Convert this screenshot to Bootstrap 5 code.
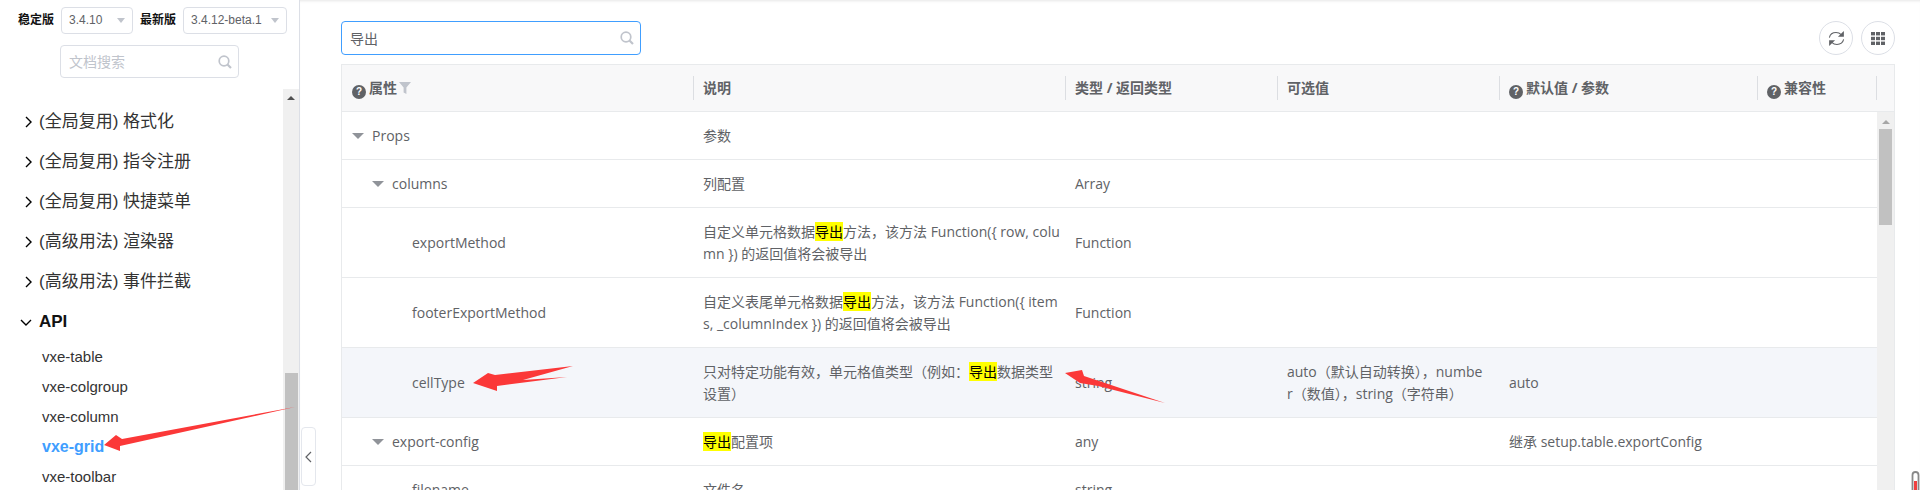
<!DOCTYPE html>
<html lang="zh-CN">
<head>
<meta charset="utf-8">
<title>API</title>
<link href="https://cdn.jsdelivr.net/npm/bootstrap@5.3.0/dist/css/bootstrap.min.css" rel="stylesheet">
<style>
html,body{height:490px;overflow:hidden;background:#fff}
body{font-family:"Open Sans","Noto Sans CJK SC",sans-serif;font-size:14px;color:#606266}
.shell{position:relative;height:490px;width:1920px}
.side{width:300px;height:490px;border-right:1px solid #dcdfe6;font-family:"Liberation Sans","Noto Sans CJK SC",sans-serif;flex:none}
.ver-row{height:41px;padding:7px 0 0 18px;gap:7px}
.ver-lab{font-size:12px;font-weight:700;color:#111;width:36px;white-space:nowrap;line-height:27px}
.sel{height:27px;border:1px solid #dcdfe6;border-radius:4px;font-size:12px;color:#606266;padding:0 7px;line-height:25px}
.sel-a{width:72px}.sel-b{width:104px}
.tri{width:0;height:0;border-left:4px solid transparent;border-right:4px solid transparent;border-top:5px solid #c0c4cc}
.doc-search{width:179px;height:33px;margin:4px 0 11px 60px;position:relative}
.doc-search input,.tool-search input{height:100%;font-size:14px;padding:0 30px 0 8px;border-radius:4px;color:#606266;border:1px solid #dcdfe6;box-shadow:none}
.doc-search input::placeholder{color:#c0c4cc}
.tool-search input,.tool-search input:focus{border-color:#409eff;box-shadow:none;color:#606266}
.mag{position:absolute;top:50%;right:7px;margin-top:-7px}
.side-body{height:401px}
.tree{flex:1;padding-top:13px;color:#303133}
.grp{height:40px;padding-left:25px;font-size:17px;gap:7px;color:#333;white-space:nowrap}
.grp-open{padding-left:20px;font-weight:700;font-size:17px;color:#111;gap:7px;height:40px}
.leaf{height:30px;line-height:30px;padding-left:42px;font-size:15px;color:#333}
.leaf-on{color:#409eff;font-weight:700;font-size:16px}
.sbar{width:16px;background:#f0f0f0;position:relative;flex:none}
.sbar-up{width:0;height:0;border-left:4px solid transparent;border-right:4px solid transparent;border-bottom:4px solid #505050;margin:7px auto 0}
.sbar-thumb{position:absolute;left:2px;width:13px;background:#c1c1c1}
.side-thumb{top:284px;bottom:0}
.toggle{position:absolute;left:301px;top:427px;width:15px;height:59px;background:#fff;border:1px solid #e4e7ed;border-radius:4px}
.main-pane{flex:1;padding:21px 25px 0 41px;box-shadow:inset 0 3px 3px -2px rgba(0,0,0,.1);min-width:0}
.tools{height:34px;margin-bottom:9px}
.tool-search{width:300px;height:34px;position:relative}
.circ{width:34px;height:34px;border-radius:50%;border:1px solid #dcdfe6;background:#fff;padding:0}
.gridbox{border:1px solid #e8eaec;border-bottom:0;height:426px;overflow:hidden}
.gridbox .table{table-layout:fixed;width:1535px;margin:0;border-collapse:separate;border-spacing:0;color:#606266;--bs-table-color:#606266;--bs-table-bg:transparent}
.gridbox td,.gridbox th{padding:0 10px;border-bottom:1px solid #e8eaec;vertical-align:middle;line-height:22px;white-space:nowrap;font-size:14px}
.gridhead{background:#f8f8f9;border-bottom:0}
.gridhead th{height:47px;font-weight:700;position:relative;border-bottom:1px solid #e8eaec}
.gridhead th+th::before,.gridhead th.endcell::after{content:"";position:absolute;top:11px;height:24px;width:1px;background:#dcdee2}
.gridhead th+th::before{left:0}
.gridhead th.endcell::after{right:0}
.hsp{width:18px;border-bottom:1px solid #e8eaec;flex:none}
.help{display:inline-block;width:14px;height:14px;border-radius:50%;background:#606266;color:#fff;font-size:10px;line-height:14px;text-align:center;font-weight:700;margin-right:3px;vertical-align:-2px;font-family:"Liberation Sans",sans-serif}
.funnel{vertical-align:-1px;margin-left:2px}
.gridbody{height:378px;overflow:hidden}
.r48 td{height:48px}.r70 td{height:70px}
.gridbody tr.on td{background:#f4f6fa}
.lv0{padding-left:10px!important}.lv1{padding-left:30px!important}.lv2{padding-left:70px!important}
.twist{display:inline-block;width:0;height:0;border-left:6px solid transparent;border-right:6px solid transparent;border-top:6px solid #909399;margin-right:8px;vertical-align:2px}
.hit{background:#ff0;color:#000}
.tsbar{width:18px;background:#f0f0f0;position:relative;flex:none}
.tsbar .sbar-up{border-bottom-color:#a6a6a6;margin-top:8px;border-left-width:4px;border-right-width:4px}
.body-thumb{left:2px;width:13px;top:17px;height:96px}
.ink{position:absolute;left:0;top:0;width:1920px;height:490px;pointer-events:none}
</style>
</head>
<body>
<div class="shell d-flex">
  <aside class="side d-flex flex-column">
    <div class="ver-row d-flex">
      <span class="ver-lab">稳定版</span>
      <div class="sel sel-a d-flex align-items-center justify-content-between"><span>3.4.10</span><i class="tri"></i></div>
      <span class="ver-lab">最新版</span>
      <div class="sel sel-b d-flex align-items-center justify-content-between"><span>3.4.12-beta.1</span><i class="tri"></i></div>
    </div>
    <div class="doc-search">
      <input class="form-control" placeholder="文档搜索">
      <svg class="mag" width="14" height="14" viewBox="0 0 14 14" fill="none" stroke="#c0c4cc" stroke-width="1.7"><circle cx="6" cy="6" r="4.8"/><path d="M9.5 9.5 13 13" stroke-width="2.2"/></svg>
    </div>
    <div class="side-body d-flex">
      <div class="tree">
        <div class="grp d-flex align-items-center"><svg width="7" height="12" viewBox="0 0 7 12" fill="none" stroke="#000" stroke-width="1.4"><path d="M1 1l5 5-5 5"/></svg><span>(全局复用) 格式化</span></div>
        <div class="grp d-flex align-items-center"><svg width="7" height="12" viewBox="0 0 7 12" fill="none" stroke="#000" stroke-width="1.4"><path d="M1 1l5 5-5 5"/></svg><span>(全局复用) 指令注册</span></div>
        <div class="grp d-flex align-items-center"><svg width="7" height="12" viewBox="0 0 7 12" fill="none" stroke="#000" stroke-width="1.4"><path d="M1 1l5 5-5 5"/></svg><span>(全局复用) 快捷菜单</span></div>
        <div class="grp d-flex align-items-center"><svg width="7" height="12" viewBox="0 0 7 12" fill="none" stroke="#000" stroke-width="1.4"><path d="M1 1l5 5-5 5"/></svg><span>(高级用法) 渲染器</span></div>
        <div class="grp d-flex align-items-center"><svg width="7" height="12" viewBox="0 0 7 12" fill="none" stroke="#000" stroke-width="1.4"><path d="M1 1l5 5-5 5"/></svg><span>(高级用法) 事件拦截</span></div>
        <div class="grp grp-open d-flex align-items-center"><svg width="12" height="7" viewBox="0 0 12 7" fill="none" stroke="#000" stroke-width="1.4"><path d="M1 1l5 5 5-5"/></svg><span>API</span></div>
        <div class="leaf">vxe-table</div>
        <div class="leaf">vxe-colgroup</div>
        <div class="leaf">vxe-column</div>
        <div class="leaf leaf-on">vxe-grid</div>
        <div class="leaf">vxe-toolbar</div>
      </div>
      <div class="sbar"><div class="sbar-up"></div><div class="sbar-thumb side-thumb"></div></div>
    </div>
  </aside>

  <main class="main-pane">
    <div class="tools d-flex justify-content-between">
      <div class="tool-search">
        <input class="form-control" value="导出">
        <svg class="mag" width="14" height="14" viewBox="0 0 14 14" fill="none" stroke="#c0c4cc" stroke-width="1.7"><circle cx="6" cy="6" r="4.8"/><path d="M9.5 9.5 13 13" stroke-width="2.2"/></svg>
      </div>
      <div class="d-flex gap-2">
        <button class="circ btn d-flex align-items-center justify-content-center" type="button" aria-label="refresh">
          <svg width="19" height="19" viewBox="0 0 16 16" fill="none" stroke="#606266" stroke-width=".9"><path d="M2 7.2C2.6 4.6 5 3 7.6 3c1.8 0 3.2.6 4.4 1.8"/><path d="M14.2 1.6v5h-5z" fill="#606266" stroke="none"/><path d="M14 8.8c-.6 2.6-3 4.2-5.6 4.2-1.8 0-3.2-.6-4.4-1.8"/><path d="M1.8 14.4v-5h5z" fill="#606266" stroke="none"/></svg>
        </button>
        <button class="circ btn d-flex align-items-center justify-content-center" type="button" aria-label="columns">
          <svg width="14" height="13" viewBox="0 0 14 13" fill="#606266"><rect x="0" y="0" width="4" height="3.4"/><rect x="5" y="0" width="4" height="3.4"/><rect x="10" y="0" width="4" height="3.4"/><rect x="0" y="4.8" width="4" height="3.4"/><rect x="5" y="4.8" width="4" height="3.4"/><rect x="10" y="4.8" width="4" height="3.4"/><rect x="0" y="9.6" width="4" height="3.4"/><rect x="5" y="9.6" width="4" height="3.4"/><rect x="10" y="9.6" width="4" height="3.4"/></svg>
        </button>
      </div>
    </div>
    <div class="gridbox">
      <div class="gridhead d-flex">
        <table class="table">
          <colgroup><col style="width:351px"><col style="width:372px"><col style="width:212px"><col style="width:222px"><col style="width:258px"><col style="width:120px"></colgroup>
          <thead><tr>
            <th><span class="help">?</span>属性<svg class="funnel" width="12" height="12" viewBox="0 0 12 12" fill="#c0c4cc"><path d="M0 0h12L7.4 5.6V12L4.6 10.4V5.6z"/></svg></th>
            <th>说明</th>
            <th>类型 / 返回类型</th>
            <th>可选值</th>
            <th><span class="help">?</span>默认值 / 参数</th>
            <th class="endcell"><span class="help">?</span>兼容性</th>
          </tr></thead>
        </table>
        <div class="hsp"></div>
      </div>
      <div class="gridbody d-flex">
        <table class="table align-self-start">
          <colgroup><col style="width:351px"><col style="width:372px"><col style="width:212px"><col style="width:222px"><col style="width:258px"><col style="width:120px"></colgroup>
          <tbody>
            <tr class="r48"><td class="lv0"><i class="twist"></i>Props</td><td>参数</td><td></td><td></td><td></td><td></td></tr>
            <tr class="r48"><td class="lv1"><i class="twist"></i>columns</td><td>列配置</td><td>Array</td><td></td><td></td><td></td></tr>
            <tr class="r70"><td class="lv2">exportMethod</td><td>自定义单元格数据<span class="hit">导出</span>方法，该方法 Function({ row, colu<br>mn }) 的返回值将会被导出</td><td>Function</td><td></td><td></td><td></td></tr>
            <tr class="r70"><td class="lv2">footerExportMethod</td><td>自定义表尾单元格数据<span class="hit">导出</span>方法，该方法 Function({ item<br>s, _columnIndex }) 的返回值将会被导出</td><td>Function</td><td></td><td></td><td></td></tr>
            <tr class="r70 on"><td class="lv2">cellType</td><td>只对特定功能有效，单元格值类型（例如：<span class="hit">导出</span>数据类型<br>设置）</td><td>string</td><td>auto（默认自动转换），numbe<br>r（数值），string（字符串）</td><td>auto</td><td></td></tr>
            <tr class="r48"><td class="lv1"><i class="twist"></i>export-config</td><td><span class="hit">导出</span>配置项</td><td>any</td><td></td><td>继承 setup.table.exportConfig</td><td></td></tr>
            <tr class="r48"><td class="lv2">filename</td><td>文件名</td><td>string</td><td></td><td></td><td></td></tr>
          </tbody>
        </table>
        <div class="tsbar"><div class="sbar-up"></div><div class="sbar-thumb body-thumb"></div></div>
      </div>
    </div>
  </main>

  <div class="toggle d-flex align-items-center justify-content-center">
    <svg width="7" height="12" viewBox="0 0 7 12" fill="none" stroke="#606266" stroke-width="1.2"><path d="M6 1 1 6l5 5"/></svg>
  </div>

  <svg class="ink" viewBox="0 0 1920 490">
    <polygon fill="#fb3838" points="104,445 116,435 122,439 295,407 120,446 120,451"/>
    <polygon fill="#fb3838" points="473,383 488,373 495,375 573,366 523,380 567,377 497,386 497,391"/>
    <polygon fill="#fb3838" points="1065,373 1082,370 1084,376 1165,403 1098,386 1092,385 1080,383"/>
    <path d="M1912.5 490v-15a3 3 0 0 1 6 0v15" fill="#fff" stroke="#888" stroke-width="1.8"/>
    <rect x="1914" y="481" width="3" height="9" fill="#f04040"/>
  </svg>
</div>
<script src="https://cdn.jsdelivr.net/npm/bootstrap@5.3.0/dist/js/bootstrap.bundle.min.js"></script>
</body>
</html>
